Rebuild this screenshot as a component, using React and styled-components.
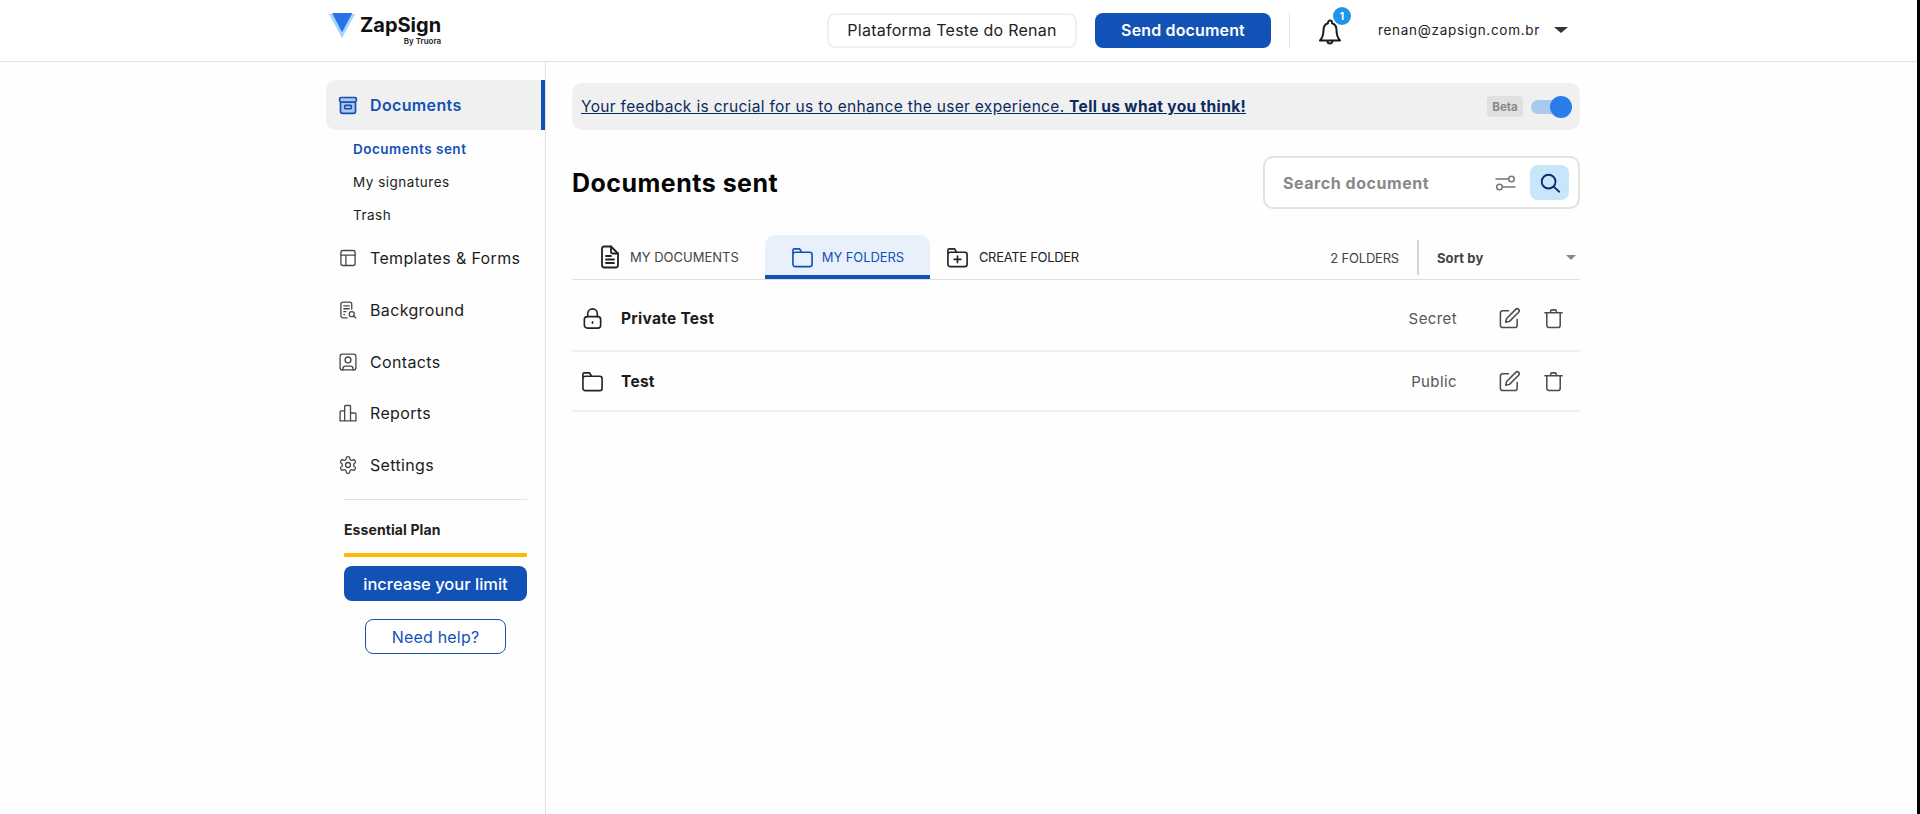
import React from "react";
import styled, { createGlobalStyle } from "styled-components";

const Global = createGlobalStyle`
  html, body { margin: 0; padding: 0; background: #000; height: 100%; overflow: hidden; }
  #root { width: 1917px; height: 814px; overflow: hidden; }
  * { box-sizing: border-box; }
  body { font-family: Inter, "Liberation Sans", sans-serif; color: #1c1c1c; }
`;

const BLUE = "#1251b5";

const Page = styled.div`
  width: 1917px;
  height: 814px;
  background: #fefefe;
  display: flex;
  flex-direction: column;
`;

const Header = styled.header`
  height: 62px;
  flex: none;
  background: #fff;
  border-bottom: 1px solid #e2e2e2;
  display: flex;
  align-items: center;
  justify-content: space-between;
  padding: 0 349px 1px 329px;
`;

const Logo = styled.div`
  display: flex;
  align-items: flex-start;
  gap: 5px;
  height: 34px;
`;

const LogoText = styled.div`
  display: flex;
  flex-direction: column;
  align-items: flex-end;
`;

const LogoName = styled.span`
  font-size: 20px;
  line-height: 24px;
  font-weight: 700;
  color: #111;
`;

const LogoBy = styled.span`
  font-size: 8px;
  line-height: 9px;
  font-weight: 600;
  color: #222;
`;

const HeaderRight = styled.div`
  display: flex;
  align-items: center;
`;

const OrgButton = styled.div`
  width: 250px;
  height: 35px;
  border: 2px solid #f0f0f0;
  border-radius: 8px;
  display: flex;
  align-items: center;
  justify-content: center;
  font-size: 16px;
  letter-spacing: 0.25px;
  color: #222;
  background: #fff;
`;

const SendButton = styled.button`
  width: 176px;
  height: 35px;
  margin-left: 18px;
  border: 0;
  border-radius: 8px;
  background: ${BLUE};
  color: #fff;
  font: 600 16px Inter, sans-serif;
  letter-spacing: 0.15px;
`;

const VLine = styled.div`
  width: 1px;
  height: 35px;
  background: #e2e2e2;
  margin-left: 18px;
`;

const BellWrap = styled.div`
  position: relative;
  width: 26px;
  height: 28px;
  margin-left: 27px;
  margin-top: 3px;
  display: flex;
`;

const Badge = styled.span`
  position: absolute;
  top: -11px;
  left: 16px;
  width: 18px;
  height: 18px;
  border-radius: 50%;
  background: #2196e8;
  color: #fff;
  font-size: 10px;
  font-weight: 700;
  display: flex;
  align-items: center;
  justify-content: center;
`;

const Email = styled.span`
  margin-left: 35px;
  font-size: 13.5px;
  letter-spacing: 0.7px;
  color: #222;
`;

const Caret = styled.span`
  width: 0;
  height: 0;
  margin-left: 14px;
  border-left: 7px solid transparent;
  border-right: 7px solid transparent;
  border-top: 6px solid #333;
`;

const Body = styled.div`
  flex: 1;
  display: flex;
  min-height: 0;
`;

const Sidebar = styled.aside`
  width: 546px;
  flex: none;
  border-right: 1px solid #e2e2e2;
  padding: 18px 0 0 326px;
`;

const NavActive = styled.div`
  height: 50px;
  background: #f0f0f0;
  border-radius: 10px 0 0 10px;
  border-right: 4px solid ${BLUE};
  display: flex;
  align-items: center;
  gap: 12px;
  padding-left: 12px;
  color: ${BLUE};
  font-size: 16px;
  letter-spacing: 0.35px;
  font-weight: 600;
`;

const SubList = styled.div`
  margin: 2px 0 1px;
  padding-left: 27px;
  display: flex;
  flex-direction: column;
`;

const SubItem = styled.div`
  height: 33px;
  display: flex;
  align-items: center;
  font-size: 13.5px;
  letter-spacing: 0.5px;
  font-weight: ${(p) => (p.$active ? 600 : 400)};
  color: ${(p) => (p.$active ? BLUE : "#222")};
`;

const NavItem = styled.div`
  height: ${(p) => p.$h}px;
  display: flex;
  align-items: center;
  gap: 12px;
  padding-left: 12px;
  font-size: 16px;
  letter-spacing: 0.35px;
  color: #1c1c1c;
`;

const Plan = styled.div`
  width: 183px;
  margin: 8px 0 0 18px;
  border-top: 1px solid #e2e2e2;
  display: flex;
  flex-direction: column;
  align-items: center;
`;

const PlanName = styled.div`
  align-self: stretch;
  margin-top: 21px;
  font-size: 14px;
  letter-spacing: 0.1px;
  line-height: 18px;
  font-weight: 700;
  color: #222;
`;

const PlanBar = styled.div`
  align-self: stretch;
  height: 4px;
  margin-top: 14px;
  background: #ffb800;
  border-radius: 1px;
`;

const LimitButton = styled.button`
  width: 183px;
  height: 35px;
  margin-top: 9px;
  border: 0;
  border-radius: 8px;
  background: ${BLUE};
  color: #fff;
  font: 500 16.5px Inter, sans-serif;
`;

const HelpButton = styled.button`
  width: 141px;
  height: 35px;
  margin-top: 18px;
  border: 1px solid ${BLUE};
  border-radius: 8px;
  background: #fff;
  color: ${BLUE};
  font: 400 16px Inter, sans-serif;
  letter-spacing: 0.2px;
`;

const Main = styled.main`
  width: 1034px;
  padding: 21px 0 0 26px;
`;

const Banner = styled.div`
  height: 47px;
  background: #f0f0f0;
  border-radius: 10px;
  display: flex;
  align-items: center;
  padding: 0 11px 0 9px;
`;

const BannerLink = styled.a`
  font-size: 15.5px;
  color: #0c2b5e;
  text-decoration: underline;
  letter-spacing: 0.32px;
  b { font-weight: 700; letter-spacing: 0.35px; }
`;

const BetaChip = styled.span`
  margin-left: auto;
  width: 36px;
  height: 21px;
  border-radius: 4px;
  background: #e0e0e0;
  color: #888;
  font-size: 11.5px;
  font-weight: 700;
  display: flex;
  align-items: center;
  justify-content: center;
`;

const Toggle = styled.span`
  position: relative;
  width: 38px;
  height: 14px;
  margin-left: 8px;
  border-radius: 7px;
  background: #a9c8ef;
`;

const Thumb = styled.span`
  position: absolute;
  right: -3px;
  top: -4px;
  width: 22px;
  height: 22px;
  border-radius: 50%;
  background: #2a7de9;
`;

const TitleRow = styled.div`
  margin-top: 26px;
  display: flex;
  align-items: center;
  justify-content: space-between;
`;

const Title = styled.h1`
  margin: 0;
  font-size: 25px;
  letter-spacing: 0.48px;
  font-weight: 700;
  color: #050505;
`;

const SearchBox = styled.div`
  width: 317px;
  height: 53px;
  border: 2px solid #e2e2e2;
  border-radius: 10px;
  display: flex;
  align-items: center;
  padding: 0 9px 0 18px;
  background: #fff;
`;

const SearchText = styled.span`
  font-size: 16px;
  letter-spacing: 0.55px;
  font-weight: 700;
  color: #888;
  flex: 1;
`;

const SearchButton = styled.span`
  width: 39px;
  height: 35px;
  margin-left: 14px;
  background: #c8e6f9;
  border-radius: 8px;
  display: flex;
  align-items: center;
  justify-content: center;
`;

const TabsRow = styled.div`
  margin-top: 26px;
  height: 45px;
  border-bottom: 1px solid #e0e0e0;
  display: flex;
  align-items: stretch;
  padding-left: 28px;
`;

const Tab = styled.div`
  height: 44px;
  display: flex;
  align-items: center;
  gap: ${(p) => (p.$active ? 8 : 10)}px;
  font-size: 13px;
  letter-spacing: ${(p) => p.$ls || 0}px;
  color: ${(p) => p.$color || "#444"};
  border-radius: 10px 10px 0 0;
  background: ${(p) => (p.$active ? "#e8f0fb" : "transparent")};
  border-bottom: 4px solid ${(p) => (p.$active ? BLUE : "transparent")};
  padding: ${(p) => (p.$active ? "4px 26px 0 26px" : "4px 0 0 0")};
  margin-left: ${(p) => p.$ml || 0}px;
`;

const TabsRight = styled.div`
  margin-left: auto;
  display: flex;
  align-items: center;
  font-size: 13px;
  color: #444;
  height: 35px;
  margin-top: 5px;
  padding-right: 4px;
  letter-spacing: -0.2px;
`;

const Divider = styled.span`
  width: 2px;
  height: 35px;
  background: #d4d4d4;
  margin-left: 18px;
`;

const SortLabel = styled.span`
  margin-left: 18px;
  font-size: 13px;
  font-weight: 700;
  letter-spacing: 0.1px;
  width: 129px;
  color: #444;
`;

const SortCaret = styled.span`
  width: 0;
  height: 0;
  border-left: 5px solid transparent;
  border-right: 5px solid transparent;
  border-top: 5px solid #888;
`;

const List = styled.div`
  margin-top: 7px;
`;

const Row = styled.div`
  height: ${(p) => p.$h}px;
  box-sizing: content-box;
  border-bottom: 2px solid #f0f0f0;
  display: flex;
  align-items: center;
  padding: 0 15px 0 9px;
`;

const RowName = styled.span`
  margin-left: 17px;
  font-size: 15.5px;
  letter-spacing: 0.27px;
  font-weight: 700;
  color: #1c1c1c;
  flex: 1;
`;

const RowKind = styled.span`
  font-size: 15px;
  color: #555;
  letter-spacing: 0.4px;
`;

const RowActions = styled.div`
  margin-left: 41px;
  display: flex;
  gap: 21px;
  align-items: center;
`;

const stroke = {
  fill: "none",
  stroke: "currentColor",
  strokeLinecap: "round",
  strokeLinejoin: "round",
};

const Svg = ({ w = 20, h = 20, sw = 1.6, color = "#444", vb = "0 0 24 24", children }) => (
  <svg width={w} height={h} viewBox={vb} style={{ color, flex: "none" }} strokeWidth={sw} {...stroke}>
    {children}
  </svg>
);

const ArchiveIcon = () => (
  <svg width="20" height="20" viewBox="0 0 24 24" style={{ flex: "none" }}>
    <rect x="3" y="8" width="18" height="14" rx="2.5" fill="#b3c7e8" stroke={BLUE} strokeWidth="2" />
    <rect x="2" y="3" width="20" height="5.5" rx="1.5" fill="#b3c7e8" stroke={BLUE} strokeWidth="2" />
    <rect x="8" y="12.5" width="8" height="4" rx="1" fill="none" stroke={BLUE} strokeWidth="2" />
  </svg>
);

const TemplateIcon = () => (
  <Svg w={20} h={20} color="#4a4a4a">
    <rect x="3.5" y="3" width="17" height="18" rx="2.5" />
    <path d="M3.5 8.5h17M9.5 8.5V21" />
  </Svg>
);

const BackgroundIcon = () => (
  <Svg w={20} h={20} color="#4a4a4a">
    <path d="M11 21.5H6a2.5 2.5 0 0 1-2.5-2.5V5A2.5 2.5 0 0 1 6 2.5h8A2.5 2.5 0 0 1 16.5 5v6" />
    <path d="M7 7h6.5M7 10.5h6.5M7 14h2.5M7 17.5h1" />
    <circle cx="16.5" cy="17" r="3" />
    <path d="m19 19.5 2.5 2" />
  </Svg>
);

const ContactIcon = () => (
  <Svg w={20} h={20} color="#4a4a4a">
    <rect x="2.5" y="2.5" width="19" height="19" rx="3" />
    <circle cx="12" cy="9.5" r="3.5" />
    <path d="M6 21.5v-1.5a3 3 0 0 1 3-3h6a3 3 0 0 1 3 3v1.5" />
  </Svg>
);

const ReportIcon = () => (
  <Svg w={20} h={20} color="#4a4a4a">
    <path d="M2.5 21.5V10.5a1 1 0 0 1 1-1h4.500v12zM8 21.500V4a1 1 0 0 1 1-1h5a1 1 0 0 1 1 1v17.500zM15 21.500V12h5.500a1 1 0 0 1 1 1v8.500z" />
  </Svg>
);

const GearIcon = () => (
  <Svg w={20} h={20} color="#4a4a4a">
    <path d="M12.2 2h-.4a2 2 0 0 0-2 2v.2a2 2 0 0 1-1 1.7l-.4.3a2 2 0 0 1-2 0l-.2-.1a2 2 0 0 0-2.7.7l-.2.4a2 2 0 0 0 .7 2.7l.2.1a2 2 0 0 1 1 1.7v.5a2 2 0 0 1-1 1.8l-.2.1a2 2 0 0 0-.7 2.7l.2.4a2 2 0 0 0 2.7.7l.2-.1a2 2 0 0 1 2 0l.4.3a2 2 0 0 1 1 1.7v.2a2 2 0 0 0 2 2h.4a2 2 0 0 0 2-2v-.2a2 2 0 0 1 1-1.7l.4-.3a2 2 0 0 1 2 0l.2.1a2 2 0 0 0 2.7-.7l.2-.4a2 2 0 0 0-.7-2.7l-.2-.1a2 2 0 0 1-1-1.8v-.5a2 2 0 0 1 1-1.7l.2-.1a2 2 0 0 0 .7-2.7l-.2-.4a2 2 0 0 0-2.7-.7l-.2.1a2 2 0 0 1-2 0l-.4-.3a2 2 0 0 1-1-1.7V4a2 2 0 0 0-2-2z" />
    <circle cx="12" cy="12" r="3" />
  </Svg>
);

const FileIcon = () => (
  <Svg w={20} h={24} sw={1.8} color="#222" vb="0 0 20 24">
    <path d="M11 1.5H4.5A2.5 2.5 0 0 0 2 4v16a2.5 2.5 0 0 0 2.500 2.500h11A2.500 2.500 0 0 0 18 20V8.500z" />
    <path d="M11 1.500V7a1.500 1.500 0 0 0 1.500 1.500H18" />
    <path d="M6 11h5M6 14.500h8M6 18h8" />
  </Svg>
);

const FolderIcon = ({ color = "#222", w = 23, h = 23, sw = 1.7 }) => (
  <Svg w={w} h={h} sw={sw} color={color}>
    <path d="M2 7V4.500A1.500 1.500 0 0 1 3.500 3h5.500l2 3.500" />
    <rect x="2" y="6.500" width="20" height="15" rx="2.500" />
  </Svg>
);

const FolderPlusIcon = () => (
  <Svg w={23} h={23} sw={1.7} color="#222">
    <path d="M2 7V4.500A1.500 1.500 0 0 1 3.500 3h5.500l2 3.500" />
    <rect x="2" y="6.500" width="20" height="15" rx="2.500" />
    <path d="M12 10.500v7M8.500 14h7" />
  </Svg>
);

const LockIcon = () => (
  <Svg w={23} h={23} sw={1.7} color="#222">
    <rect x="3.500" y="10" width="17" height="12" rx="3" />
    <path d="M7 10V7a5 5 0 0 1 10 0v3" />
    <path d="M12 15.500v1.500" />
  </Svg>
);

const EditIcon = () => (
  <Svg w={23} h={23} sw={1.6} color="#4c4c4c">
    <path d="M11 4H5a2.500 2.500 0 0 0-2.500 2.500V19A2.500 2.500 0 0 0 5 21.500h12.500A2.500 2.500 0 0 0 20 19v-6" />
    <path d="M18.500 2.500a2.100 2.100 0 0 1 3 3L12 15l-4 1 1-4z" />
  </Svg>
);

const TrashIcon = () => (
  <Svg w={23} h={23} sw={1.6} color="#4c4c4c">
    <path d="M3 6h18M9 6V4.500A1.500 1.500 0 0 1 10.500 3h3A1.500 1.500 0 0 1 15 4.500V6" />
    <path d="M5 6v13a2.500 2.500 0 0 0 2.500 2.500h9A2.500 2.500 0 0 0 19 19V6" />
  </Svg>
);

const BellIcon = () => (
  <svg width="26" height="28" viewBox="0 0 26 28" fill="none" stroke="#1c1c1c" strokeWidth="2" strokeLinejoin="round" strokeLinecap="round">
    <path d="M13 2.500a2 2 0 0 0-2 2v.8C7.800 6.300 6.500 9 6.500 12c0 5-.8 7.500-3.500 10.500h20c-2.700-3-3.500-5.500-3.500-10.500 0-3-1.300-5.700-4.500-6.700v-.8a2 2 0 0 0-2-2z" />
    <path d="M10.500 23a2.500 2.500 0 0 0 5 0" />
  </svg>
);

const FilterIcon = () => (
  <Svg w={21} h={16} sw={1.5} color="#777" vb="0 0 21 16">
    <path d="M1 4h12" />
    <circle cx="16.500" cy="4" r="2.800" />
    <path d="M20 12H8" />
    <circle cx="4.500" cy="12" r="2.800" />
  </Svg>
);

const SearchIcon = () => (
  <Svg w={22} h={22} sw={2} color="#0c2b6e">
    <circle cx="10.500" cy="10.500" r="7.500" />
    <path d="m16 16 6 5.500" />
  </Svg>
);

const LogoMark = () => (
  <svg width="26" height="25" viewBox="0 0 25 24" style={{ flex: "none" }}>
    <path d="M0 1h25L12.500 24z" fill="#a6d4fb" />
    <path d="M3 0h19.500L12.500 18.500z" fill="#2a72e8" />
  </svg>
);

const nav = [
  ["Templates & Forms", TemplateIcon, 52],
  ["Background", BackgroundIcon, 52],
  ["Contacts", ContactIcon, 51],
  ["Reports", ReportIcon, 52],
  ["Settings", GearIcon, 52],
];

const folders = [
  { name: "Private Test", kind: "Secret", Icon: LockIcon, h: 63 },
  { name: "Test", kind: "Public", Icon: FolderIcon, h: 58 },
];

export default function App() {
  return (
    <>
      <Global />
      <Page>
        <Header>
          <Logo>
            <LogoMark />
            <LogoText>
              <LogoName>ZapSign</LogoName>
              <LogoBy>By Truora</LogoBy>
            </LogoText>
          </Logo>
          <HeaderRight>
            <OrgButton>Plataforma Teste do Renan</OrgButton>
            <SendButton>Send document</SendButton>
            <VLine />
            <BellWrap>
              <BellIcon />
              <Badge>1</Badge>
            </BellWrap>
            <Email>renan@zapsign.com.br</Email>
            <Caret />
          </HeaderRight>
        </Header>
        <Body>
          <Sidebar>
            <NavActive>
              <ArchiveIcon />
              Documents
            </NavActive>
            <SubList>
              <SubItem $active>Documents sent</SubItem>
              <SubItem>My signatures</SubItem>
              <SubItem>Trash</SubItem>
            </SubList>
            {nav.map(([label, Icon, h]) => (
              <NavItem key={label} $h={h}>
                <Icon />
                {label}
              </NavItem>
            ))}
            <Plan>
              <PlanName>Essential Plan</PlanName>
              <PlanBar />
              <LimitButton>increase your limit</LimitButton>
              <HelpButton>Need help?</HelpButton>
            </Plan>
          </Sidebar>
          <Main>
            <Banner>
              <BannerLink>
                Your feedback is crucial for us to enhance the user experience. <b>Tell us what you think!</b>
              </BannerLink>
              <BetaChip>Beta</BetaChip>
              <Toggle>
                <Thumb />
              </Toggle>
            </Banner>
            <TitleRow>
              <Title>Documents sent</Title>
              <SearchBox>
                <SearchText>Search document</SearchText>
                <FilterIcon />
                <SearchButton>
                  <SearchIcon />
                </SearchButton>
              </SearchBox>
            </TitleRow>
            <TabsRow>
              <Tab>
                <FileIcon />
                MY DOCUMENTS
              </Tab>
              <Tab $active $color={BLUE} $ml={26} $ls={-0.1}>
                <FolderIcon color={BLUE} />
                MY FOLDERS
              </Tab>
              <Tab $color="#222" $ml={16} $ls={-0.3}>
                <FolderPlusIcon />
                CREATE FOLDER
              </Tab>
              <TabsRight>
                2 FOLDERS
                <Divider />
                <SortLabel>Sort by</SortLabel>
                <SortCaret />
              </TabsRight>
            </TabsRow>
            <List>
              {folders.map(({ name, kind, Icon, h }) => (
                <Row key={name} $h={h}>
                  <Icon />
                  <RowName>{name}</RowName>
                  <RowKind>{kind}</RowKind>
                  <RowActions>
                    <EditIcon />
                    <TrashIcon />
                  </RowActions>
                </Row>
              ))}
            </List>
          </Main>
        </Body>
      </Page>
    </>
  );
}
